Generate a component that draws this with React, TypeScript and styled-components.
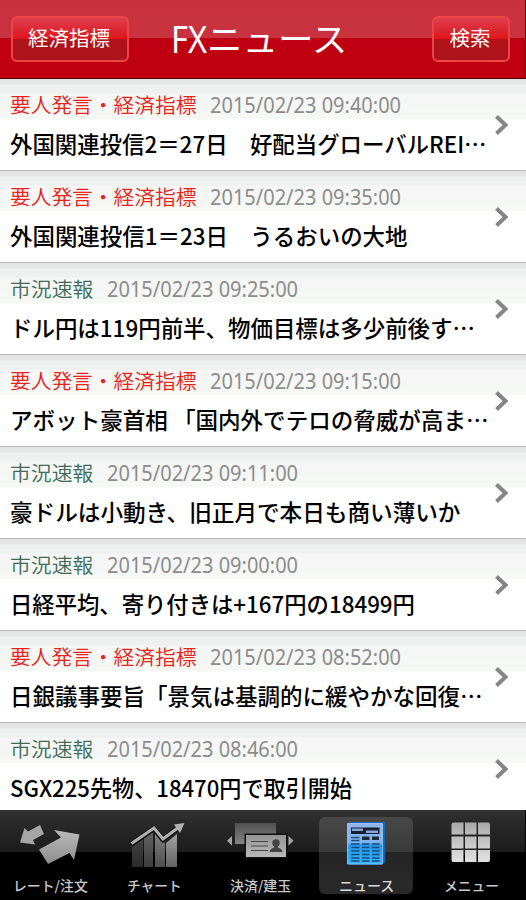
import React, { useLayoutEffect, useRef, useState } from "react";
import styled, { createGlobalStyle } from "styled-components";

const GlobalStyle = createGlobalStyle`
  * { box-sizing: border-box; }
  html, body { margin: 0; background: #fff; }
  body { overflow: hidden; font-family: "Noto Sans CJK JP", "Noto Sans", sans-serif; }
  button { font: inherit; border: 0; padding: 0; }
`;

const Screen = styled.div`
  width: 526px;
  height: 900px;
  display: flex;
  flex-direction: column;
  overflow: hidden;
  background: #fff;
`;

const Header = styled.header`
  flex: none;
  height: 79px;
  padding: 0 15px 1px 11px;
  display: grid;
  grid-template-columns: 118px 1fr 78px;
  align-items: center;
  border-bottom: 1px solid #4c0007;
  border-right: 1px solid #5a0009;
  background: linear-gradient(#c9303d 0, #c8333f 38px, #bf0012 38px, #bf0010 100%);
`;

const HeaderButton = styled.button`
  height: 46px;
  padding: 0 2px 3px 0;
  border: 2px solid #ee4547;
  border-radius: 6px;
  color: #fff;
  font-size: 20.5px;
  line-height: 20px;
  display: flex;
  align-items: center;
  justify-content: center;
  background: linear-gradient(#e03f4c 0, #dc2630 30%, #e2161a 49%, #b01319 51%, #ae131b 100%);
`;

const Title = styled.h1`
  margin: 0 0 3px 42px;
  display: flex;
  align-items: center;
  color: #fff;
  font-size: 34.5px;
  font-weight: 400;
  line-height: 50px;
`;

const TitleLatin = styled.span`
  font-family: "Noto Sans", sans-serif;
  font-size: 38px;
  margin-top: 1px;
`;

const List = styled.ul`
  flex: 1;
  min-height: 0;
  margin: 0;
  padding: 0;
  list-style: none;
  overflow: hidden;
`;

const Row = styled.li`
  height: 92px;
  padding: 0 17px 0 10px;
  display: flex;
  align-items: center;
  border-bottom: 1px solid #b9b9b9;
  background: linear-gradient(
    #e4e4e4 0, #e6e6e6 5px, #eeefef 6px, #eff1f0 14px, #f4f5f4 15px,
    #f5f6f5 24px, #f5f8f5 33px, #f6f8f6 40px, #fff 41px
  );
`;

const Body = styled.div`
  flex: 1;
  min-width: 0;
  display: flex;
  flex-direction: column;
`;

const Meta = styled.div`
  height: 40px;
  display: flex;
  align-items: center;
  gap: 14px;
  padding-bottom: 1px;
`;

const Category = styled.span<{ $market: boolean }>`
  color: ${(p) => (p.$market ? "#3f6b57" : "#e8231a")};
  font-size: 20.6px;
  font-weight: 350;
  line-height: 30px;
`;

const Time = styled.time`
  color: #8c8c8c;
  font-family: "Noto Sans", sans-serif;
  font-size: 22px;
  font-weight: 400;
  line-height: 30px;
`;

const Headline = styled.div`
  height: 40px;
  color: #000;
  font-size: 22.5px;
  font-weight: 500;
  line-height: 36px;
`;

const Ellipsis = styled.span`
  display: inline-block;
  width: 1em;
`;

const FitBox = styled.span`
  display: block;
  white-space: nowrap;
`;

const FitInner = styled.span`
  display: inline-block;
  transform-origin: 0 50%;
`;

/* Condenses or widens a line of text so that it fills the given width. */
function Fit({ width, children }: { width: number; children: React.ReactNode }) {
  const ref = useRef<HTMLSpanElement>(null);
  const [scale, setScale] = useState(1);
  useLayoutEffect(() => {
    if (ref.current) setScale(width / ref.current.offsetWidth);
  }, [width]);
  return (
    <FitBox style={{ width }}>
      <FitInner ref={ref} style={{ transform: `scaleX(${scale})` }}>{children}</FitInner>
    </FitBox>
  );
}

const Chevron = styled.svg`
  flex: none;
  width: 15px;
  height: 22px;
  margin-top: 1px;
`;

const TabBar = styled.nav`
  flex: none;
  height: 90px;
  padding-right: 1px;
  display: grid;
  grid-template-columns: 102px repeat(3, 105.5px) 1fr;
  border-right: 1px solid #000;
  background: linear-gradient(#323232 0, #2b2b2b 10px, #1c1c1c 42px, #000 42px, #000 100%);
`;

const Tab = styled.button<{ $active?: boolean; $first?: boolean }>`
  height: 77px;
  margin: 7px 6px 0 ${(p) => (p.$first ? "3px" : "6px")};
  padding-top: 1px;
  border-radius: 6px;
  display: flex;
  flex-direction: column;
  align-items: center;
  color: ${(p) => (p.$active ? "#dadada" : "#c9c9c9")};
  background: ${(p) =>
    p.$active ? "linear-gradient(#484848 0, #3a3a3a 35px, #252525 35px, #292929 100%)" : "transparent"};
`;

const Icon = styled.svg`
  flex: none;
  width: 70px;
  height: 50px;
  overflow: visible;
`;

const TabLabel = styled.span`
  margin-top: 7px;
  padding-right: 1px;
  font-size: 13.5px;
  font-weight: 500;
  line-height: 20px;
`;

function RateIcon() {
  return (
    <Icon viewBox="15 818 70 50">
      <defs>
        <linearGradient id="silver" x1="0" y1="0" x2="0" y2="1">
          <stop offset="0" stopColor="#b9b9b9" />
          <stop offset="1" stopColor="#8d8d8d" />
        </linearGradient>
      </defs>
      <path d="M20 842.5 24.5 828 28 831.5 40 825 44 834 33 840 35 844.500Z" fill="#a6a6a6" />
      <path d="M54 830 79.500 834.500 74 860 69.500 853 48 864 39 849.500 61 837.500Z" fill="url(#silver)" />
    </Icon>
  );
}

function ChartIcon() {
  return (
    <Icon viewBox="120 818 70 50">
      <defs>
        <linearGradient id="barFade" x1="0" y1="0" x2="0" y2="1">
          <stop offset="0" stopColor="#000" stopOpacity="0" />
          <stop offset="1" stopColor="#000" stopOpacity=".4" />
        </linearGradient>
      </defs>
      <path d="M132 847 143 839V867H132Z" fill="#484848" />
      <path d="M144 838 153 832V867H144Z" fill="#646464" />
      <path d="M155 833 165 843V867H155Z" fill="#828282" />
      <path d="M166 843 177 834V867H166Z" fill="#a5a5a5" />
      <path d="M132 847 153 832 165 843 177 834V867H132Z" fill="url(#barFade)" />
      <path d="M131.500 844 154 828.500 163 839.500 180 826.500" fill="none" stroke="#161616" strokeWidth="5.500" />
      <path d="M131.500 843.500 154 828 163 839 179 827" fill="none" stroke="#b1b1b1" strokeWidth="3" />
      <path d="M174 824.500 184.500 823 180 833Z" fill="#b1b1b1" />
    </Icon>
  );
}

function PositionIcon() {
  return (
    <Icon viewBox="225 818 70 50">
      <defs>
        <linearGradient id="backCard" x1="0" y1="0" x2="0" y2="1">
          <stop offset="0" stopColor="#505050" />
          <stop offset="1" stopColor="#858585" />
        </linearGradient>
        <linearGradient id="frontCard" x1="0" y1="0" x2="0" y2="1">
          <stop offset="0" stopColor="#949494" />
          <stop offset="1" stopColor="#b9b9b9" />
        </linearGradient>
      </defs>
      <path d="M235 823H276V844H235Z" fill="url(#backCard)" />
      <path d="M244.500 833.500H287.500V858.500H244.500Z" fill="#111" />
      <path d="M246 835H286V857H246Z" fill="url(#frontCard)" />
      <path d="M251 841.500H268M251 846H268M251 850.500H268" stroke="#484848" strokeWidth="1.100" />
      <circle cx="276" cy="843" r="3.700" fill="#444" />
      <path d="M269.500 852Q270 848.500 274 847.500V845H278V847.500Q282 848.500 282.500 852Z" fill="#444" />
      <path d="M232 836V845.500L227 840.700Z" fill="#a5a5a5" />
      <path d="M288.500 836V845.500L293.500 840.700Z" fill="#a5a5a5" />
    </Icon>
  );
}

function NewsIcon() {
  return (
    <Icon viewBox="331 818 70 50">
      <defs>
        <linearGradient id="paper" x1="0" y1="0" x2="0" y2="1">
          <stop offset="0" stopColor="#91b4eb" />
          <stop offset=".46" stopColor="#82b4f0" />
          <stop offset=".54" stopColor="#2798ee" />
          <stop offset="1" stopColor="#35b4fa" />
        </linearGradient>
      </defs>
      <path d="M349 822H385V863H382V865H349Z" fill="#1765b4" />
      <path d="M347.500 823.500H382.500V864H347.500Z" fill="url(#paper)" stroke="#b2d5ff" strokeWidth=".7" />
      <path d="M351 827.500H379.500V834H351Z" fill="#171f2e" />
      <path d="M352 828.500H363V831H352ZM366 830.500H378V833H366Z" fill="#82a7df" />
      <path d="M362 836.500H369.500V840H362ZM372 836.500H379V840H372Z" fill="#202a34" />
      <path
        d="M351 837.500H359.500M351 840.500H359.500M351 844H359.500M362 844H369.500M372 844H379.500M351 847.500H359.500M362 847.500H369.500M372 847.500H379.500M351 851H359.500M362 851H369.500M372 851H379.500M351 854.500H359.500M362 854.500H369.500M372 854.500H379.500M351 858H359.500M362 858H369.500M372 858H379.500M351 861H359.500M362 861H369.500M372 861H379.500"
        stroke="#174c7d"
        strokeWidth="1.300"
      />
    </Icon>
  );
}

function MenuIcon() {
  return (
    <Icon viewBox="436.500 818 70 50">
      <defs>
        <linearGradient id="tiles" gradientUnits="userSpaceOnUse" x1="0" y1="822" x2="0" y2="862">
          <stop offset="0" stopColor="#a8a8a8" />
          <stop offset="1" stopColor="#e2e2e2" />
        </linearGradient>
      </defs>
      <path
        d="M454 822.500H464V834.500H452V824.500Q452 822.500 454 822.500ZM465.500 822.500H477V834.500H465.500ZM478.500 822.500H488.500Q490.500 822.500 490.500 824.500V834.500H478.500ZM452 836.500H464V848.500H452ZM465.500 836.500H477V848.500H465.500ZM478.500 836.500H490.500V848.500H478.500ZM452 850H464V862H454Q452 862 452 860ZM465.500 850H477V862H465.500ZM478.500 850H490.500V860Q490.500 862 488.500 862H478.500Z"
        fill="url(#tiles)"
      />
    </Icon>
  );
}

type News = { market?: boolean; time: string; text: string; more?: boolean; width: number };

const news: News[] = [
  { time: "09:40:00", text: "外国関連投信2＝27日　好配当グローバルREI", more: true, width: 476 },
  { time: "09:35:00", text: "外国関連投信1＝23日　うるおいの大地", width: 397 },
  { market: true, time: "09:25:00", text: "ドル円は119円前半、物価目標は多少前後す", more: true, width: 465 },
  { time: "09:15:00", text: "アボット豪首相 「国内外でテロの脅威が高ま", more: true, width: 479 },
  { market: true, time: "09:11:00", text: "豪ドルは小動き、旧正月で本日も商い薄いか", width: 450 },
  { market: true, time: "09:00:00", text: "日経平均、寄り付きは+167円の18499円", width: 405 },
  { time: "08:52:00", text: "日銀議事要旨「景気は基調的に緩やかな回復", more: true, width: 473 },
  { market: true, time: "08:46:00", text: "SGX225先物、18470円で取引開始", width: 342 },
];

const tabs = [
  { label: "レート/注文", width: 75, icon: <RateIcon /> },
  { label: "チャート", width: 55, icon: <ChartIcon /> },
  { label: "決済/建玉", width: 61, icon: <PositionIcon /> },
  { label: "ニュース", width: 55, icon: <NewsIcon />, active: true },
  { label: "メニュー", width: 55, icon: <MenuIcon /> },
];

export default function App() {
  return (
    <Screen lang="ja">
      <GlobalStyle />
      <Header>
        <HeaderButton>経済指標</HeaderButton>
        <Title>
          <TitleLatin><Fit width={36}>FX</Fit></TitleLatin>
          <Fit width={140}>ニュース</Fit>
        </Title>
        <HeaderButton>検索</HeaderButton>
      </Header>
      <List>
        {news.map((n) => (
          <Row key={n.time}>
            <Body>
              <Meta>
                <Category $market={!!n.market}>
                  <Fit width={n.market ? 83 : 186}>{n.market ? "市況速報" : "要人発言・経済指標"}</Fit>
                </Category>
                <Time><Fit width={191}>{`2015/02/23 ${n.time}`}</Fit></Time>
              </Meta>
              <Headline>
                <Fit width={n.width}>
                  {n.text}
                  {n.more && <Ellipsis>…</Ellipsis>}
                </Fit>
              </Headline>
            </Body>
            <Chevron viewBox="0 0 15 22">
              <path d="M2.500 2.500 11.500 11 2.500 19.500" fill="none" stroke="#858585" strokeWidth="4" />
            </Chevron>
          </Row>
        ))}
      </List>
      <TabBar>
        {tabs.map((t, i) => (
          <Tab key={t.label} $active={t.active} $first={i === 0}>
            {t.icon}
            <TabLabel><Fit width={t.width}>{t.label}</Fit></TabLabel>
          </Tab>
        ))}
      </TabBar>
    </Screen>
  );
}
